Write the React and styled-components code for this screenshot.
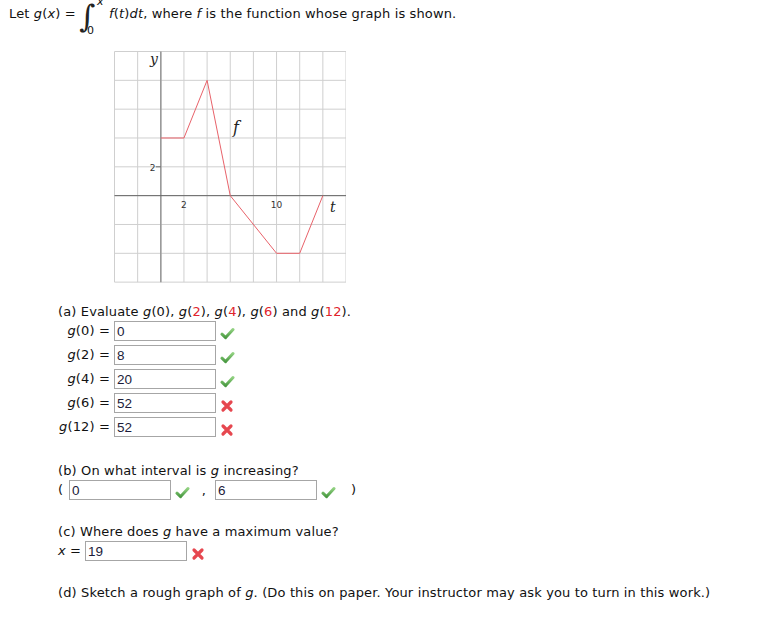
import React from "react";
import styled, { createGlobalStyle } from "styled-components";

const GlobalStyle = createGlobalStyle`
  body {
    margin: 0;
    background: #fff;
    color: #111;
    font-family: "DejaVu Sans", Verdana, sans-serif;
    font-size: 13px;
    letter-spacing: 0.14px;
  }
`;

const COL = 23.15;
const ROW = 28.83;
const px = (x) => ((x + 4) / 2) * COL + 0.5;
const py = (y) => ((10 - y) / 2) * ROW + 0.5;

const fPoints = [
  [0, 4],
  [2, 4],
  [4, 8],
  [6, 0],
  [10, -4],
  [12, -4],
  [14, 0],
];

const Check = () => (
  <svg width="15" height="13" viewBox="0 0 15 13">
    <defs>
      <linearGradient id="ck" x1="0" y1="0" x2="0" y2="1">
        <stop offset="0" stopColor="#8fd07f" />
        <stop offset="1" stopColor="#4a9a42" />
      </linearGradient>
    </defs>
    <path
      d="M2 7.2 L5.6 10.6 L13 2.6"
      fill="none"
      stroke="url(#ck)"
      strokeWidth="3"
      strokeLinecap="round"
      strokeLinejoin="round"
    />
  </svg>
);

const Cross = () => (
  <svg width="14" height="14" viewBox="0 0 14 14">
    <path
      d="M3 3 L11 11 M11 3 L3 11"
      fill="none"
      stroke="#e6474f"
      strokeWidth="3.2"
      strokeLinecap="round"
    />
  </svg>
);

const Mark = ({ ok }) => <MarkBox>{ok ? <Check /> : <Cross />}</MarkBox>;

const Graph = () => (
  <GraphSvg width="232" height="232" viewBox="0 0 232 232">
    {Array.from({ length: 11 }, (_, i) => (
      <line
        key={"v" + i}
        x1={i * COL + 0.5}
        y1="0.5"
        x2={i * COL + 0.5}
        y2={8 * ROW + 0.5}
        stroke="#cfcfcf"
        strokeWidth="1"
      />
    ))}
    {Array.from({ length: 9 }, (_, j) => (
      <line
        key={"h" + j}
        x1="0.5"
        y1={j * ROW + 0.5}
        x2={10 * COL + 0.5}
        y2={j * ROW + 0.5}
        stroke="#cfcfcf"
        strokeWidth="1"
      />
    ))}
    <line x1={px(0)} y1="0.5" x2={px(0)} y2={py(-6)} stroke="#9a9a9a" strokeWidth="1.6" />
    <line x1="0.5" y1={py(0)} x2={px(16)} y2={py(0)} stroke="#666" strokeWidth="1" />
    <line x1={px(0) - 5} y1={py(2)} x2={px(0)} y2={py(2)} stroke="#666" strokeWidth="1" />
    <polyline
      points={fPoints.map(([x, y]) => `${px(x)},${py(y)}`).join(" ")}
      fill="none"
      stroke="#e8626a"
      strokeWidth="1"
    />
    <AxisText x="36" y="13" fontSize="14">y</AxisText>
    <AxisText x="119" y="82" fontSize="16">f</AxisText>
    <AxisText x="216" y="161" fontSize="14">t</AxisText>
    <TickText x={px(2)} y="157">2</TickText>
    <TickText x={px(10)} y="157">10</TickText>
    <TickText x={px(0) - 8} y={py(2) + 4}>2</TickText>
  </GraphSvg>
);

export default function App() {
  return (
    <Page>
      <GlobalStyle />
      <Intro>
        Let <Var>g</Var>(<Var>x</Var>) ={" "}
        <IntegralBox>
          <Sign>∫</Sign>
          <Upper>x</Upper>
          <Lower>0</Lower>
        </IntegralBox>
        <Var>f</Var>(<Var>t</Var>)<Var>dt</Var>, where <Var>f</Var> is the function whose graph is shown.
      </Intro>

      <Graph />

      <Section $gap={20}>
        <Heading>
          (a) Evaluate <Var>g</Var>(0), <Var>g</Var>(<Red>2</Red>), <Var>g</Var>(<Red>4</Red>),{" "}
          <Var>g</Var>(<Red>6</Red>) and <Var>g</Var>(<Red>12</Red>).
        </Heading>
        {[
          ["0", "0", true],
          ["2", "8", true],
          ["4", "20", true],
          ["6", "52", false],
          ["12", "52", false],
        ].map(([arg, val, ok]) => (
          <EvalRow key={arg}>
            <Label>
              <Var>g</Var>({arg}) =
            </Label>
            <Answer defaultValue={val} />
            <Mark ok={ok} />
          </EvalRow>
        ))}
      </Section>

      <Section $gap={25}>
        <Heading>
          (b) On what interval is <Var>g</Var> increasing?
        </Heading>
        <InlineRow>
          <Paren>(</Paren>
          <Answer defaultValue="0" />
          <Mark ok />
          <Comma>,</Comma>
          <Answer defaultValue="6" />
          <Mark ok />
          <Paren $right>)</Paren>
        </InlineRow>
      </Section>

      <Section $gap={23}>
        <Heading>
          (c) Where does <Var>g</Var> have a maximum value?
        </Heading>
        <InlineRow>
          <XLabel>
            <Var>x</Var> =
          </XLabel>
          <Answer defaultValue="19" />
          <Mark ok={false} />
        </InlineRow>
      </Section>

      <Section $gap={23}>
        <Heading>
          (d) Sketch a rough graph of <Var>g</Var>. (Do this on paper. Your instructor may ask you to turn in this work.)
        </Heading>
      </Section>
    </Page>
  );
}

const Page = styled.div`
  padding: 0 0 20px 9px;
`;

const Var = styled.i`
  font-style: italic;
`;

const Red = styled.span`
  color: #e0242c;
`;

const Intro = styled.div`
  padding-top: 5px;
  line-height: 18px;
  height: 18px;
`;

const IntegralBox = styled.span`
  position: relative;
  display: inline-block;
  width: 29px;
  height: 18px;
  vertical-align: top;
`;

const Sign = styled.span`
  position: absolute;
  left: -1px;
  top: -9px;
  font-family: "DejaVu Serif", serif;
  font-style: italic;
  font-size: 31px;
  line-height: 40px;
  color: #222;
`;

const Upper = styled.i`
  position: absolute;
  left: 17px;
  top: -12px;
  font-size: 11px;
`;

const Lower = styled.span`
  position: absolute;
  left: 7px;
  top: 17px;
  font-size: 11px;
`;

const GraphSvg = styled.svg`
  display: block;
  margin: 28px 0 0 105px;
`;

const AxisText = styled.text`
  font-family: "DejaVu Serif", "Liberation Serif", serif;
  font-style: italic;
  fill: #222;
`;

const TickText = styled.text`
  font-family: "DejaVu Sans", sans-serif;
  font-size: 9px;
  fill: #333;
  text-anchor: middle;
`;

const Section = styled.div`
  padding-left: 49px;
  margin-top: ${({ $gap }) => ($gap ?? 18) + "px"};
`;

const Heading = styled.div`
  line-height: 18px;
`;

const EvalRow = styled.div`
  display: flex;
  align-items: flex-start;
  height: 20px;
  margin-bottom: 4px;
`;

const InlineRow = styled.div`
  display: flex;
  align-items: flex-start;
  height: 20px;
`;

const Label = styled.span`
  width: 52px;
  padding-right: 4px;
  text-align: right;
  line-height: 20px;
  white-space: nowrap;
`;

const XLabel = styled.span`
  width: 25px;
  padding-right: 2px;
  line-height: 20px;
  white-space: nowrap;
`;

const Answer = styled.input.attrs({ type: "text" })`
  box-sizing: border-box;
  width: 102px;
  height: 20px;
  margin: 0;
  padding: 0 2px;
  border: 1px solid #a6a6a6;
  font-family: "Liberation Sans", Arial, sans-serif;
  font-size: 13.5px;
  letter-spacing: 0;
  color: #1c1c3a;
  outline: none;
`;

const MarkBox = styled.span`
  display: flex;
  width: 22px;
  justify-content: center;
  padding-top: 6px;
`;

const Paren = styled.span`
  width: ${({ $right }) => ($right ? "auto" : "11px")};
  margin-left: ${({ $right }) => ($right ? "12px" : "0")};
  line-height: 20px;
`;

const Comma = styled.span`
  width: 22px;
  text-align: center;
  line-height: 22px;
`;
